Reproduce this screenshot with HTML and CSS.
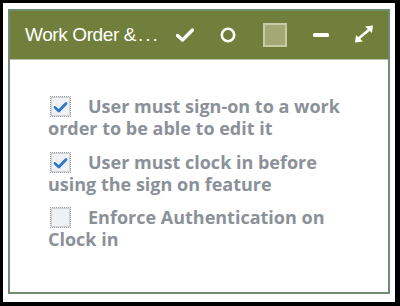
FILE: index.html
```html
<!DOCTYPE html>
<html>
<head>
<meta charset="utf-8">
<link rel="stylesheet" href="styles.css">
</head>
<body>
<div class="frame">
  <div class="panel">
    <div class="header">
      <div class="title">Work Order &amp;<span class="dots">...</span></div>
      <div class="tools">
        <svg class="ico ico-check" width="18" height="14" viewBox="0 0 18 14"><path d="M1.5 7.5 L6.5 12 L16.5 2" fill="none" stroke="#fff" stroke-width="3.4" stroke-linecap="round" stroke-linejoin="round"/></svg>
        <svg class="ico ico-circle" width="16" height="16" viewBox="0 0 16 16"><circle cx="8" cy="8" r="6.2" fill="none" stroke="#fff" stroke-width="2.6"/></svg>
        <span class="swatch"></span>
        <svg class="ico ico-minus" width="18" height="6" viewBox="0 0 18 6"><rect x="1" y="1" width="16" height="4" rx="1.5" fill="#fff"/></svg>
        <svg class="ico ico-expand" width="22" height="20" viewBox="0 0 22 20"><path d="M5 15 L17 5" stroke="#fff" stroke-width="2.6" stroke-linecap="round"/><path d="M12 2.5 L20 1.5 L19 9 Z" fill="#fff"/><path d="M10 17.5 L2 18.5 L3 11 Z" fill="#fff"/></svg>
      </div>
    </div>
    <div class="body">
      <div class="item"><span class="cb checked"><svg width="15" height="12" viewBox="0 0 15 12"><path d="M2 6.5 L5.8 10 L13 2.5" fill="none" stroke="#2f78cf" stroke-width="2.8" stroke-linecap="round" stroke-linejoin="round"/></svg></span><span class="lbl">User must sign-on to a work order to be able to edit it</span></div>
      <div class="item"><span class="cb checked"><svg width="15" height="12" viewBox="0 0 15 12"><path d="M2 6.5 L5.8 10 L13 2.5" fill="none" stroke="#2f78cf" stroke-width="2.8" stroke-linecap="round" stroke-linejoin="round"/></svg></span><span class="lbl">User must clock in before using the sign on feature</span></div>
      <div class="item"><span class="cb"></span><span class="lbl">Enforce Authentication on Clock in</span></div>
    </div>
  </div>
</div>
</body>
</html>
```
FILE: styles.css
```css
html, body {
  margin: 0;
  padding: 0;
  background: #000;
}
body {
  width: 400px;
  height: 306px;
  overflow: hidden;
}
.frame {
  margin: 3px 5px 4px 3px;
  height: 299px;
  box-sizing: border-box;
  background: #fff;
  padding: 6px 5px 8px 5px;
}
.panel {
  height: 285px;
  box-sizing: border-box;
  border: 2px solid #6e8c70;
  display: flex;
  flex-direction: column;
}
.header {
  height: 48px;
  flex: none;
  background: #70803c;
  display: flex;
  align-items: center;
  border-bottom: 1px solid #b9bfb0;
}
.title {
  box-sizing: border-box;
  flex: none;
  font-family: "Liberation Sans", Arial, sans-serif;
  font-size: 19px;
  letter-spacing: -0.4px;
  color: #fff;
  padding-left: 15px;
  width: 166px;
  white-space: nowrap;
}
.dots {
  letter-spacing: 2px;
  margin-left: 2px;
}
.tools {
  display: flex;
  align-items: center;
  flex: 1;
}
.ico { display: block; flex: none; }
.ico-check { margin-left: 0; }
.ico-circle { margin-left: 26px; }
.swatch {
  display: block;
  flex: none;
  width: 20px;
  height: 20px;
  margin-left: 27px;
  background: #a3a874;
  border: 2px solid #c8cba6;
}
.ico-minus { margin-left: 25px; }
.ico-expand { margin-left: 23px; margin-top: -2px; }
.body {
  padding: 35px 33px 0 38px;
  font-family: "Open Sans", "Segoe UI", sans-serif;
  font-weight: 700;
  font-size: 18px;
  line-height: 22px;
  color: #8b9199;
}
.item { margin-bottom: 11.5px; }
.cb {
  display: inline-block;
  box-sizing: border-box;
  width: 21px;
  height: 21px;
  margin-left: 2px;
  margin-right: 17px;
  vertical-align: -4px;
  border: 1px dotted #9a9a9a;
  outline: 1px solid #d0d0d0;
  outline-offset: -2px;
  background: #eef2f4;
  position: relative;
}
.cb svg {
  position: absolute;
  left: 2px;
  top: 4px;
}
```
